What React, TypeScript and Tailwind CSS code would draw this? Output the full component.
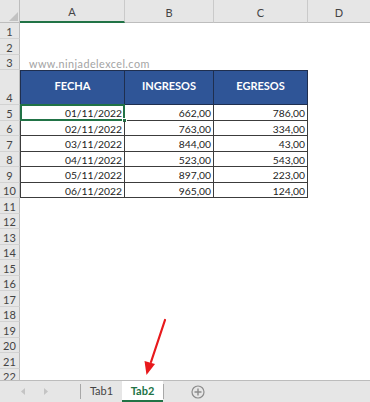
import React from 'react';

const rows = [
  { fecha: '01/11/2022', ing: '662,00', egr: '786,00' },
  { fecha: '02/11/2022', ing: '763,00', egr: '334,00' },
  { fecha: '03/11/2022', ing: '844,00', egr: '43,00' },
  { fecha: '04/11/2022', ing: '523,00', egr: '543,00' },
  { fecha: '05/11/2022', ing: '897,00', egr: '223,00' },
  { fecha: '06/11/2022', ing: '965,00', egr: '124,00' },
];

const grid = 'grid grid-cols-[20px_105px_89px_94px_1fr]';

function RowHead({ n }: { n: number }) {
  return (
    <div className="bg-[#e6e6e6] border-r border-b border-r-[#bdbdbd] border-b-[#d2d2d2] flex items-end justify-center pb-[1px] text-[#444] text-[11px] leading-none">
      {n}
    </div>
  );
}

export default function App() {
  const empties = Array.from({ length: 12 }, (_, i) => i + 11);

  return (
    <div
      className="relative w-[370px] h-[402px] overflow-hidden bg-white flex flex-col text-[10.3px] text-[#222]"
      style={{ fontFamily: 'Lato, "Open Sans", sans-serif' }}
    >
      {/* Column headers */}
      <div className={`${grid} h-[23px] shrink-0 bg-[#e6e6e6] text-[#444] text-[11px]`}>
        <div className="relative border-r border-b border-[#bdbdbd]">
          <svg className="absolute left-[9px] top-[12px]" width="9" height="9" viewBox="0 0 9 9">
            <polygon points="9,0 9,9 0,9" fill="#c2c2c2" />
          </svg>
        </div>
        <div className="flex items-center justify-center border-r border-[#cacaca] border-b-2 border-b-[#217346] pt-[4px]">A</div>
        <div className="flex items-center justify-center border-r border-b border-[#cacaca] border-b-[#bdbdbd] pt-[4px]">B</div>
        <div className="flex items-center justify-center border-r border-b border-[#cacaca] border-b-[#bdbdbd] pt-[4px]">C</div>
        <div className="flex items-center justify-center border-b border-[#bdbdbd] pt-[4px]">D</div>
      </div>

      {/* Rows 1-3 */}
      <div className={`${grid} h-[16px] shrink-0`}>
        <RowHead n={1} />
        <div /><div /><div /><div />
      </div>
      <div className={`${grid} h-[16px] shrink-0`}>
        <RowHead n={2} />
        <div /><div /><div /><div />
      </div>
      <div className={`${grid} h-[15px] shrink-0`}>
        <RowHead n={3} />
        <div className="relative">
          <span className="absolute left-[9px] bottom-[0px] whitespace-nowrap text-[#a3a3a3] text-[10.8px] tracking-[0.45px] leading-none">
            www.ninjadelexcel.com
          </span>
        </div>
        <div /><div /><div />
      </div>

      {/* Row 4 - table header */}
      <div className={`${grid} h-[35px] shrink-0 text-[11px]`}>
        <RowHead n={4} />
        <div className="bg-[#2f5597] border border-[#1f2f4f] flex items-center justify-center text-white font-bold pb-[2px]">FECHA</div>
        <div className="bg-[#2f5597] border-y border-r border-[#1f2f4f] flex items-center justify-center text-white font-bold pb-[2px]">INGRESOS</div>
        <div className="bg-[#2f5597] border-y border-r border-[#1f2f4f] flex items-center justify-center text-white font-bold pb-[2px]">EGRESOS</div>
        <div />
      </div>

      {/* Data rows */}
      {rows.map((r, i) => (
        <div key={i} className={`${grid} h-[15.5px] shrink-0`}>
          <RowHead n={i + 5} />
          <div className="relative border-l border-r border-b border-[#3c3c3c] flex items-end justify-end pr-[2px] leading-none pb-[1px]">
            {r.fecha}
            {i === 0 && (
              <>
                <div className="absolute -left-[1px] -top-[1px] -right-[1px] -bottom-[1px] border-2 border-[#217346]" />
                <div className="absolute -right-[3px] -bottom-[3px] w-[5px] h-[5px] bg-[#217346] border border-white" />
              </>
            )}
          </div>
          <div className="border-r border-b border-[#3c3c3c] flex items-end justify-end pr-[2px] leading-none pb-[1px]">{r.ing}</div>
          <div className="border-r border-b border-[#3c3c3c] flex items-end justify-end pr-[2px] leading-none pb-[1px]">{r.egr}</div>
          <div />
        </div>
      ))}

      {/* Empty rows */}
      {empties.map((n) => (
        <div key={n} className={`${grid} h-[15.5px] shrink-0`}>
          <RowHead n={n} />
          <div /><div /><div /><div />
        </div>
      ))}

      {/* Sheet tabs */}
      <div className="absolute left-0 right-0 bottom-0 h-[22px] bg-[#e6e6e6] border-t border-[#bcbcbc] flex items-stretch text-[11px]">
        <div className="w-[80px] flex items-center">
          <svg className="ml-[21px]" width="5" height="7" viewBox="0 0 5 7">
            <polygon points="4,0 4,7 0,3.5" fill="#c4c4c4" />
          </svg>
          <svg className="ml-[17px]" width="5" height="7" viewBox="0 0 5 7">
            <polygon points="1,0 1,7 5,3.5" fill="#c4c4c4" />
          </svg>
        </div>
        <div className="w-px bg-[#a8a8a8] my-[3px]" />
        <div className="w-[41px] flex items-center justify-center text-[#444]">Tab1</div>
        <div className="w-[41px] bg-white flex items-center justify-center text-[#217346] font-bold border-b-2 border-[#217346] pt-[1px]">Tab2</div>
        <div className="w-px bg-[#a8a8a8] my-[3px]" />
        <div className="flex items-center ml-[27px]">
          <svg width="14" height="14" viewBox="0 0 14 14">
            <circle cx="7" cy="7" r="6" fill="none" stroke="#8c8c8c" strokeWidth="1.2" />
            <path d="M7 3.5v7M3.5 7h7" stroke="#8c8c8c" strokeWidth="1.4" />
          </svg>
        </div>
      </div>

      {/* Red arrow annotation */}
      <svg className="absolute left-0 top-0 pointer-events-none" width="370" height="402">
        <line x1="165" y1="320" x2="151" y2="362" stroke="#e8191c" strokeWidth="2.2" strokeLinecap="round" />
        <polygon points="146.5,375 144.5,361 155,364" fill="#e8191c" />
      </svg>
    </div>
  );
}
